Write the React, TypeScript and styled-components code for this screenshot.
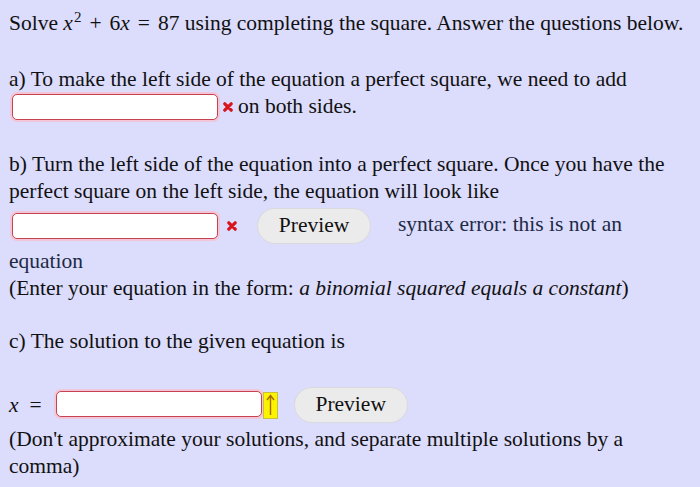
import React from "react";
import styled, { createGlobalStyle } from "styled-components";

const GlobalStyle = createGlobalStyle`
  html, body {
    margin: 0;
    padding: 0;
    background: #dcdcfc;
  }
  body {
    font-family: "Liberation Serif", "Times New Roman", serif;
    font-size: 21.5px;
    color: #111;
  }
`;

const Page = styled.div`
  padding: 10px 0 0 9px;
  width: 692px;
  box-sizing: border-box;
  line-height: 27px;
`;

const Para = styled.p<{ $gap?: number }>`
  margin: 0 0 ${(p) => p.$gap ?? 26}px 0;
`;

const MathVar = styled.span`
  font-style: italic;
`;

const Sup = styled.sup`
  font-size: 15px;
  line-height: 0;
  margin-left: 1px;
`;

const Op = styled.span<{ $space?: number }>`
  margin: 0 ${(p) => p.$space ?? 8}px;
`;

const AnswerInput = styled.span<{ $width?: number }>`
  display: inline-block;
  vertical-align: middle;
  width: ${(p) => p.$width ?? 206}px;
  height: 26px;
  box-sizing: border-box;
  background: #fff;
  border: 1px solid #c4434e;
  border-radius: 5px;
  box-shadow: 0 0 0 2px #f2c6d8;
  margin: -2px 0 0 3px;
`;

const Mark = styled.span<{ $left?: number; $right?: number }>`
  display: inline-block;
  vertical-align: middle;
  margin: -2px ${(p) => p.$right ?? 5}px 0 ${(p) => p.$left ?? 5}px;
  line-height: 0;
`;

const PreviewButton = styled.span<{ $left?: number }>`
  display: inline-flex;
  align-items: center;
  justify-content: center;
  vertical-align: middle;
  box-sizing: border-box;
  width: 114px;
  height: 36px;
  border-radius: 18px;
  background: #ebebeb;
  border: 1px solid #d9d9de;
  color: #111;
  line-height: 1;
  margin: 3px 27px 4px ${(p) => p.$left ?? 20}px;
`;

const Feedback = styled.span`
  color: #1d2a45;
`;

const ArrowTag = styled.span`
  display: inline-flex;
  align-items: center;
  justify-content: center;
  width: 15px;
  height: 27px;
  background: #fbf300;
  border: 1px solid #c8bf3c;
  box-sizing: border-box;
  margin-left: 1px;
`;

const Row = styled.div`
  display: flex;
  align-items: center;
  height: 40px;
  margin-bottom: 1px;
`;

const Cross = () => (
  <svg width="10" height="10" viewBox="0 0 10 10">
    <path d="M1.8 1.8 L8.2 8.2 M8.2 1.8 L1.8 8.2" stroke="#d8141c" strokeWidth="3.2" strokeLinecap="round" />
  </svg>
);

const UpArrow = () => (
  <svg width="9" height="22" viewBox="0 0 9 22">
    <path d="M4.5 21 V2 M1 6 L4.5 1.5 L8 6" stroke="#a86a00" strokeWidth="1.4" fill="none" />
  </svg>
);

export default function App() {
  return (
    <>
      <GlobalStyle />
      <Page>
        <Para $gap={29}>
          Solve <MathVar>x</MathVar>
          <Sup>2</Sup>
          <Op>+</Op>6<MathVar>x</MathVar>
          <Op>=</Op>87 using completing the square. Answer the questions below.
        </Para>
        <Para $gap={31}>
          a) To make the left side of the equation a perfect square, we need to add
          <br />
          <AnswerInput />
          <Mark>
            <Cross />
          </Mark>
          on both sides.
        </Para>
        <Para $gap={26}>
          b) Turn the left side of the equation into a perfect square. Once you have the perfect square on the left side,
          the equation will look like
          <br />
          <AnswerInput />
          <Mark $left={9} $right={0}>
            <Cross />
          </Mark>
          <PreviewButton>Preview</PreviewButton>
          <Feedback>syntax error: this is not an equation</Feedback>
          <br />
          (Enter your equation in the form: <i>a binomial squared equals a constant</i>)
        </Para>
        <Para $gap={30}>c) The solution to the given equation is</Para>
        <Row>
          <MathVar>x</MathVar>
          <Op $space={11}>=</Op>
          <AnswerInput />
          <ArrowTag>
            <UpArrow />
          </ArrowTag>
          <PreviewButton $left={16}>Preview</PreviewButton>
        </Row>
        <Para>(Don't approximate your solutions, and separate multiple solutions by a comma)</Para>
      </Page>
    </>
  );
}
